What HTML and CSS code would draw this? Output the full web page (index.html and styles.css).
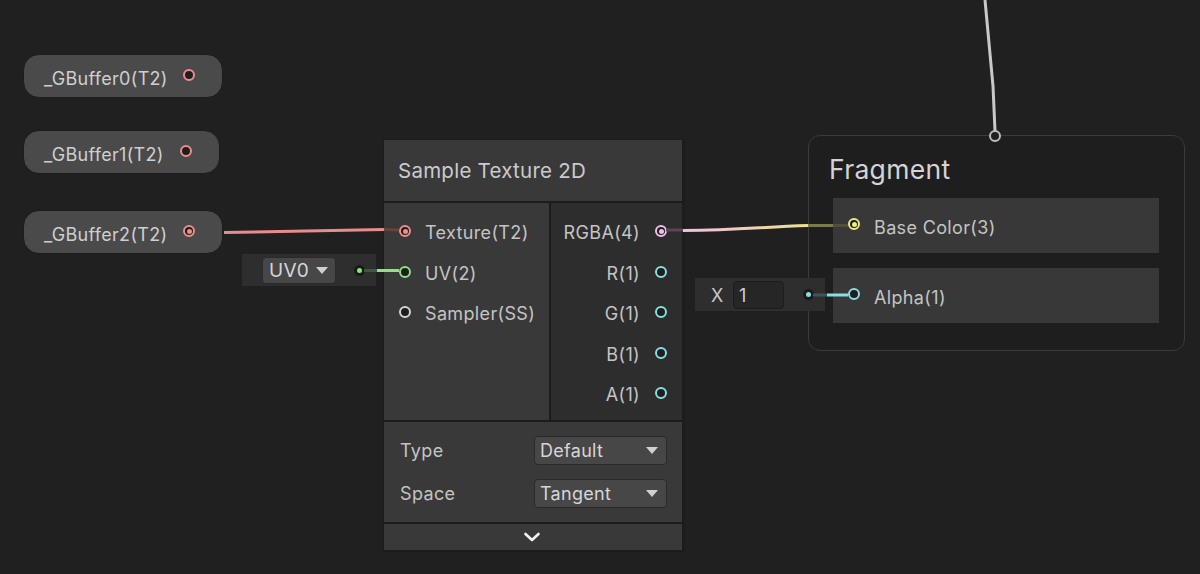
FILE: index.html
```html
<!DOCTYPE html>
<html>
<head>
<meta charset="utf-8">
<link rel="stylesheet" href="styles.css">
</head>
<body>
<div class="canvas">
  <div class="prop prop0"><span class="prop-label">_GBuffer0(T2)</span><span class="port pink"></span></div>
  <div class="prop prop1"><span class="prop-label">_GBuffer1(T2)</span><span class="port pink"></span></div>
  <div class="prop prop2"><span class="prop-label">_GBuffer2(T2)</span><span class="port pink filled"></span></div>

  <div class="inline-field uv-field">
    <div class="dropdown small"><span>UV0</span><span class="tri"></span></div>
    <span class="inline-dot green-dot"></span>
  </div>

  <div class="node sample">
    <div class="node-title">Sample Texture 2D</div>
    <div class="node-body">
      <div class="inputs">
        <div class="row in"><span class="port pink filled"></span><span class="lbl">Texture(T2)</span></div>
        <div class="row in"><span class="port green"></span><span class="lbl">UV(2)</span></div>
        <div class="row in"><span class="port white"></span><span class="lbl">Sampler(SS)</span></div>
      </div>
      <div class="outputs">
        <div class="row out"><span class="lbl">RGBA(4)</span><span class="port lilac filled"></span></div>
        <div class="row out"><span class="lbl">R(1)</span><span class="port cyan"></span></div>
        <div class="row out"><span class="lbl">G(1)</span><span class="port cyan"></span></div>
        <div class="row out"><span class="lbl">B(1)</span><span class="port cyan"></span></div>
        <div class="row out"><span class="lbl">A(1)</span><span class="port cyan"></span></div>
      </div>
    </div>
    <div class="node-props">
      <div class="prop-row"><span class="prop-name">Type</span><div class="dropdown wide"><span>Default</span><span class="tri"></span></div></div>
      <div class="prop-row"><span class="prop-name">Space</span><div class="dropdown wide"><span>Tangent</span><span class="tri"></span></div></div>
    </div>
    <div class="node-footer">
      <svg width="18" height="12" viewBox="0 0 18 12"><path d="M2.5 3 L9 9 L15.5 3" fill="none" stroke="#f2f2f2" stroke-width="2.6" stroke-linecap="round" stroke-linejoin="round"/></svg>
    </div>
  </div>

  <div class="fragment">
    <div class="frag-title">Fragment</div>
    <div class="frag-slot"><span class="port yellow filled"></span><span class="lbl">Base Color(3)</span></div>
    <div class="frag-slot"><span class="port cyan"></span><span class="lbl">Alpha(1)</span></div>
  </div>

  <div class="inline-field x-field">
    <span class="x-label">X</span>
    <div class="num-input">1</div>
    <span class="inline-dot cyan-dot"></span>
  </div>

  <svg class="wires" width="1200" height="574" viewBox="0 0 1200 574">
    <defs>
      <linearGradient id="rg" x1="683" y1="0" x2="808" y2="0" gradientUnits="userSpaceOnUse">
        <stop offset="0" stop-color="#f2bde9"/>
        <stop offset="1" stop-color="#e9e38a"/>
      </linearGradient>
    </defs>
    <line x1="224" y1="232.5" x2="384" y2="229.5" stroke="#e88c8c" stroke-width="3"/>
    <line x1="384" y1="229.5" x2="399" y2="230" stroke="#6a4141" stroke-width="3"/>
    <line x1="364" y1="270.5" x2="377" y2="270.5" stroke="#3e5a3c" stroke-width="3"/>
    <line x1="377" y1="270.5" x2="399" y2="270.5" stroke="#8ee27f" stroke-width="3"/>
    <line x1="666" y1="230" x2="683" y2="230" stroke="#5a4557" stroke-width="3"/>
    <path d="M683 230.5 C 740 230, 760 227, 808 225.5" fill="none" stroke="url(#rg)" stroke-width="3"/>
    <line x1="808" y1="225.5" x2="833" y2="225.5" stroke="#7b7a4c" stroke-width="3"/>
    <line x1="833" y1="225.5" x2="848" y2="225.5" stroke="#4f4f3c" stroke-width="3"/>
    <line x1="813" y1="295" x2="827" y2="295" stroke="#3c5556" stroke-width="3"/>
    <line x1="827" y1="295" x2="848" y2="295" stroke="#86dfe3" stroke-width="3"/>
    <path d="M985 0 L993 86 L995 131" fill="none" stroke="#c9c9c9" stroke-width="3"/>
    <circle cx="995" cy="136" r="5" fill="#202020" stroke="#bdbdbd" stroke-width="2"/>
  </svg>
</div>
</body>
</html>
```
FILE: styles.css
```css
* { box-sizing: border-box; }
html, body { margin: 0; padding: 0; }
body {
  background: #202020;
  font-family: Inter, "Noto Sans", "Liberation Sans", sans-serif;
  color: #c4c4c4;
}
.canvas {
  position: relative;
  width: 1200px;
  height: 574px;
  overflow: hidden;
  background: #202020;
}

/* ports */
.port {
  display: inline-block;
  width: 12px;
  height: 12px;
  border-radius: 50%;
  border: 2px solid #c4c4c4;
  background: #1e1e1e;
  flex: none;
  position: relative;
}
.port.filled::after {
  content: "";
  position: absolute;
  left: 1.5px; top: 1.5px;
  width: 5px; height: 5px;
  border-radius: 50%;
  background: currentColor;
}
.port.pink { border-color: #ee8d8d; color: #ee8d8d; }
.port.green { border-color: #8ee27f; color: #8ee27f; }
.port.white { border-color: #d4d4d4; }
.port.cyan { border-color: #86dfe3; color: #86dfe3; }
.port.lilac { border-color: #f2bde9; color: #f2bde9; }
.port.yellow { border-color: #ecea8c; color: #ecea8c; }

.lbl { padding-top: 3px; }

/* property pills */
.prop {
  position: absolute;
  left: 23px;
  width: 200px;
  height: 44px;
  border-radius: 16px;
  background: #4a4a4a;
  border: 1px solid #1c1c1c;
  display: flex;
  align-items: center;
  padding-left: 20px;
  font-size: 18px;
  letter-spacing: 0.3px;
  color: #cfcfcf;
  z-index: 2;
}
.prop .prop-label { width: 139px; padding-top: 4px; }
.prop .port { margin-top: -2px; }
.prop0 { top: 54px; }
.prop1 { top: 130px; width: 197px; }
.prop1 .prop-label { width: 136px; }
.prop2 { top: 210px; }

/* inline fields */
.inline-field {
  position: absolute;
  background: #2e2e2e;
  display: flex;
  align-items: center;
  z-index: 3;
}
.uv-field {
  left: 242px; top: 254px;
  width: 134px; height: 32px;
  padding-left: 20px;
}
.x-field {
  left: 695px; top: 278px;
  width: 130px; height: 33px;
  padding-left: 16px;
}
.inline-dot {
  width: 11px; height: 11px;
  border-radius: 50%;
  background: #1a1a1a;
  position: relative;
  flex: none;
}
.inline-dot::after {
  content: "";
  position: absolute;
  left: 3px; top: 3px;
  width: 5px; height: 5px;
  border-radius: 50%;
}
.green-dot { margin-left: 18px; }
.green-dot::after { background: #8ee27f; }
.cyan-dot { margin-left: 19px; }
.cyan-dot::after { background: #86dfe3; }
.x-label { font-size: 18px; color: #c8c8c8; width: 22px; padding-top: 2px; }
.num-input {
  width: 51px; height: 28px;
  background: #262626;
  border: 1px solid #1c1c1c;
  border-radius: 4px;
  font-size: 18px;
  color: #d0d0d0;
  padding: 3px 0 0 5px;
}

/* dropdowns */
.dropdown {
  display: flex;
  align-items: center;
  justify-content: space-between;
  background: #474747;
  border: 1px solid #2a2a2a;
  border-radius: 4px;
  font-size: 18px;
  letter-spacing: 0.3px;
  color: #d6d6d6;
}
.dropdown.small {
  width: 74px; height: 27px;
  padding: 0 7px 0 6px;
  font-size: 19px;
}
.dropdown.wide {
  width: 133px; height: 29px;
  padding: 0 8px 0 5px;
}
.tri {
  width: 0; height: 0;
  border-left: 6px solid transparent;
  border-right: 6px solid transparent;
  border-top: 7px solid #d0d0d0;
}

/* Sample Texture node */
.node {
  position: absolute;
  left: 383px; top: 139px;
  width: 302px;
  background: #1c1c1c;
  border: 1px solid #1c1c1c;
  border-right-width: 3px;
  border-bottom-width: 2px;
  display: flex;
  flex-direction: column;
  gap: 2px;
  z-index: 2;
}
.node-title {
  height: 61px;
  background: #393939;
  padding: 18px 0 0 14px;
  font-size: 20.5px;
  letter-spacing: 0.25px;
  color: #cbcbcb;
}
.node-body {
  display: flex;
  gap: 2px;
  height: 217px;
}
.inputs {
  width: 165px;
  background: #393939;
  padding-top: 8px;
}
.outputs {
  flex: 1;
  background: #2d2d2d;
  padding-top: 8px;
}
.row {
  height: 40.5px;
  display: flex;
  align-items: center;
  font-size: 18px;
  letter-spacing: 0.35px;
  color: #c4c4c4;
}
.row.in { padding-left: 15px; gap: 14px; }
.row.out { justify-content: flex-end; padding-right: 15px; gap: 15px; }
.node-props {
  background: #393939;
  height: 100px;
  padding: 14px 15px 0 16px;
  display: flex;
  flex-direction: column;
  gap: 14px;
}
.prop-row {
  display: flex;
  align-items: center;
  justify-content: space-between;
}
.prop-name { font-size: 18px; letter-spacing: 0.35px; color: #c4c4c4; }
.node-footer {
  height: 26px;
  background: #393939;
  display: flex;
  align-items: center;
  justify-content: center;
  padding-right: 2px;
}

/* Fragment */
.fragment {
  position: absolute;
  left: 808px; top: 135px;
  width: 377px; height: 216px;
  border: 1.5px solid #3b3b3b;
  border-radius: 12px;
  background: #1e1e1e;
  padding: 17px 0 0 24px;
  display: flex;
  flex-direction: column;
  gap: 15px;
  z-index: 1;
}
.frag-title {
  font-size: 26.5px;
  letter-spacing: 0.3px;
  color: #d4d4d4;
  height: 29px;
  margin-left: -4px;
  margin-bottom: 1px;
}
.frag-slot {
  width: 326px;
  height: 55px;
  background: #383838;
  display: flex;
  align-items: center;
  padding-left: 15px;
  gap: 14px;
  font-size: 18px;
  letter-spacing: 0.35px;
  color: #c4c4c4;
}
.frag-slot .port { margin-top: -3px; }
.frag-slot .lbl { padding-top: 4px; }

.wires {
  position: absolute;
  left: 0; top: 0;
  z-index: 4;
  pointer-events: none;
}
```
